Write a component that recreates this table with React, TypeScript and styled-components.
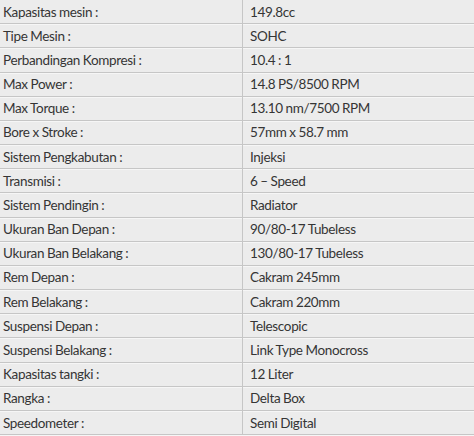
import React from 'react';
import styled, { createGlobalStyle } from 'styled-components';

const specs: [string, string][] = [
  ['Kapasitas mesin :', '149.8cc'],
  ['Tipe Mesin :', 'SOHC'],
  ['Perbandingan Kompresi :', '10.4 : 1'],
  ['Max Power :', '14.8 PS/8500 RPM'],
  ['Max Torque :', '13.10 nm/7500 RPM'],
  ['Bore x Stroke :', '57mm x 58.7 mm'],
  ['Sistem Pengkabutan :', 'Injeksi'],
  ['Transmisi :', '6 – Speed'],
  ['Sistem Pendingin :', 'Radiator'],
  ['Ukuran Ban Depan :', '90/80-17 Tubeless'],
  ['Ukuran Ban Belakang :', '130/80-17 Tubeless'],
  ['Rem Depan :', 'Cakram 245mm'],
  ['Rem Belakang :', 'Cakram 220mm'],
  ['Suspensi Depan :', 'Telescopic'],
  ['Suspensi Belakang :', 'Link Type Monocross'],
  ['Kapasitas tangki :', '12 Liter'],
  ['Rangka :', 'Delta Box'],
  ['Speedometer :', 'Semi Digital'],
];

const GlobalStyle = createGlobalStyle`
  html, body {
    margin: 0;
    padding: 0;
    background: #ececec;
  }
`;

const Table = styled.div`
  width: 474px;
  height: 436px;
  background: #ececec;
  font-family: Lato, 'Open Sans', sans-serif;
  font-size: 13.5px;
  letter-spacing: -0.35px;
  word-spacing: -0.3px;
  color: #353535;
  overflow: hidden;
`;

const Row = styled.div`
  display: grid;
  grid-template-columns: 242px 1fr;
  height: 24.18px;
  box-sizing: border-box;
  border-bottom: 1px solid #c6c6c6;
  box-shadow: 0 1px 0 #f6f6f6;
`;

const Cell = styled.div<{ $value?: boolean }>`
  display: flex;
  align-items: center;
  padding-left: ${p => (p.$value ? '7px' : '3px')};
  border-left: ${p => (p.$value ? '1px solid #c6c6c6' : 'none')};
  white-space: nowrap;
`;

const App: React.FC = () => {
  return (
    <>
      <GlobalStyle />
      <Table>
        {specs.map(([label, value]) => (
          <Row key={label}>
            <Cell>{label}</Cell>
            <Cell $value>{value}</Cell>
          </Row>
        ))}
      </Table>
    </>
  );
};

export default App;
